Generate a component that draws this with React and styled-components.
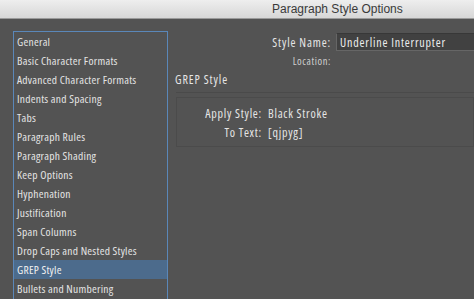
import React from "react";
import styled, { createGlobalStyle } from "styled-components";

const GlobalStyle = createGlobalStyle`
  html, body { margin: 0; padding: 0; background: #535353; }
  #root { width: 474px; height: 299px; overflow: hidden; }
`;

const Window = styled.div`
  width: 474px;
  height: 299px;
  display: flex;
  flex-direction: column;
  background: #535353;
  font-family: "Open Sans", "Liberation Sans", sans-serif;
  font-stretch: 75%;
  overflow: hidden;
`;

const TitleBar = styled.div`
  height: 18px;
  flex: none;
  background: linear-gradient(#eeeeee, #d7d7d7);
  border-bottom: 1px solid #9a9a9a;
  display: flex;
  align-items: center;
  padding-left: 272px;
  font-family: "Liberation Sans", Arial, sans-serif;
  font-stretch: normal;
  font-size: 12px;
  color: #3a3a3a;
  white-space: nowrap;
`;

const Body = styled.div`
  flex: 1;
  display: flex;
  align-items: flex-start;
  padding: 12px 0 0 13px;
  min-height: 0;
`;

const CategoryList = styled.ul`
  list-style: none;
  margin: 0;
  padding: 0;
  width: 153px;
  height: 300px;
  flex: none;
  border: 1px solid #5a87b9;
  border-bottom: none;
  background: #535353;
`;

const Category = styled.li`
  height: 19px;
  display: flex;
  align-items: center;
  padding-left: 3px;
  font-size: 11.5px;
  letter-spacing: 0.25px;
  color: ${(p) => (p.$selected ? "#f2f2f2" : "#e4e4e4")};
  background: ${(p) => (p.$selected ? "#4c6b8c" : "transparent")};
  white-space: nowrap;
`;

const Panel = styled.div`
  flex: 1;
  display: flex;
  flex-direction: column;
  padding: 2px 0 0 7px;
  min-width: 0;
`;

const FieldRow = styled.div`
  display: flex;
  align-items: center;
  gap: 5px;
  height: ${(p) => p.$h || 18}px;
  margin-top: ${(p) => p.$mt || 0}px;
`;

const FieldLabel = styled.div`
  width: 156px;
  flex: none;
  text-align: right;
  font-size: ${(p) => (p.$small ? 10.5 : 12)}px;
  letter-spacing: ${(p) => (p.$small ? 0.6 : 0.85)}px;
  color: ${(p) => (p.$small ? "#cfcfcf" : "#e6e6e6")};
  white-space: nowrap;
`;

const TextInput = styled.div`
  flex: 1;
  height: 18px;
  box-sizing: border-box;
  background: #414141;
  border: 1px solid #666666;
  border-top-color: #383838;
  border-right: none;
  display: flex;
  align-items: center;
  padding-left: 3px;
  font-size: 12px;
  letter-spacing: 0.8px;
  color: #ededed;
  white-space: nowrap;
`;

const SectionTitle = styled.div`
  margin-top: 1px;
  height: 18px;
  display: flex;
  align-items: center;
  font-size: 12px;
  letter-spacing: 0.9px;
  color: #e6e6e6;
  white-space: nowrap;
`;

const Rule = styled.div`
  margin-top: 4px;
  margin-left: 1px;
  height: 1px;
  background: #4a4a4a;
`;

const RuleBox = styled.div`
  margin-top: 4px;
  margin-left: 1px;
  height: 42px;
  border: 1px solid #4b4b4b;
  padding-top: 6px;
  box-sizing: content-box;
  display: flex;
  flex-direction: column;
`;

const RuleRow = styled.div`
  display: flex;
  align-items: center;
  gap: 6px;
  height: 19px;
`;

const RuleLabel = styled.div`
  width: 85px;
  flex: none;
  text-align: right;
  font-size: 12px;
  letter-spacing: 0.75px;
  color: #e6e6e6;
  white-space: nowrap;
`;

const RuleValue = styled.div`
  font-size: 12px;
  letter-spacing: 0.75px;
  color: #e6e6e6;
  white-space: nowrap;
`;

const categories = [
  "General",
  "Basic Character Formats",
  "Advanced Character Formats",
  "Indents and Spacing",
  "Tabs",
  "Paragraph Rules",
  "Paragraph Shading",
  "Keep Options",
  "Hyphenation",
  "Justification",
  "Span Columns",
  "Drop Caps and Nested Styles",
  "GREP Style",
  "Bullets and Numbering",
];

export default function App() {
  return (
    <>
      <GlobalStyle />
      <Window>
        <TitleBar>Paragraph Style Options</TitleBar>
        <Body>
          <CategoryList>
            {categories.map((c) => (
              <Category key={c} $selected={c === "GREP Style"}>
                {c}
              </Category>
            ))}
          </CategoryList>
          <Panel>
            <FieldRow>
              <FieldLabel>Style Name:</FieldLabel>
              <TextInput>Underline Interrupter</TextInput>
            </FieldRow>
            <FieldRow $mt={2} $h={16}>
              <FieldLabel $small>Location:</FieldLabel>
            </FieldRow>
            <SectionTitle>GREP Style</SectionTitle>
            <Rule />
            <RuleBox>
              <RuleRow>
                <RuleLabel>Apply Style:</RuleLabel>
                <RuleValue>Black Stroke</RuleValue>
              </RuleRow>
              <RuleRow>
                <RuleLabel>To Text:</RuleLabel>
                <RuleValue>[qjpyg]</RuleValue>
              </RuleRow>
            </RuleBox>
          </Panel>
        </Body>
      </Window>
    </>
  );
}
